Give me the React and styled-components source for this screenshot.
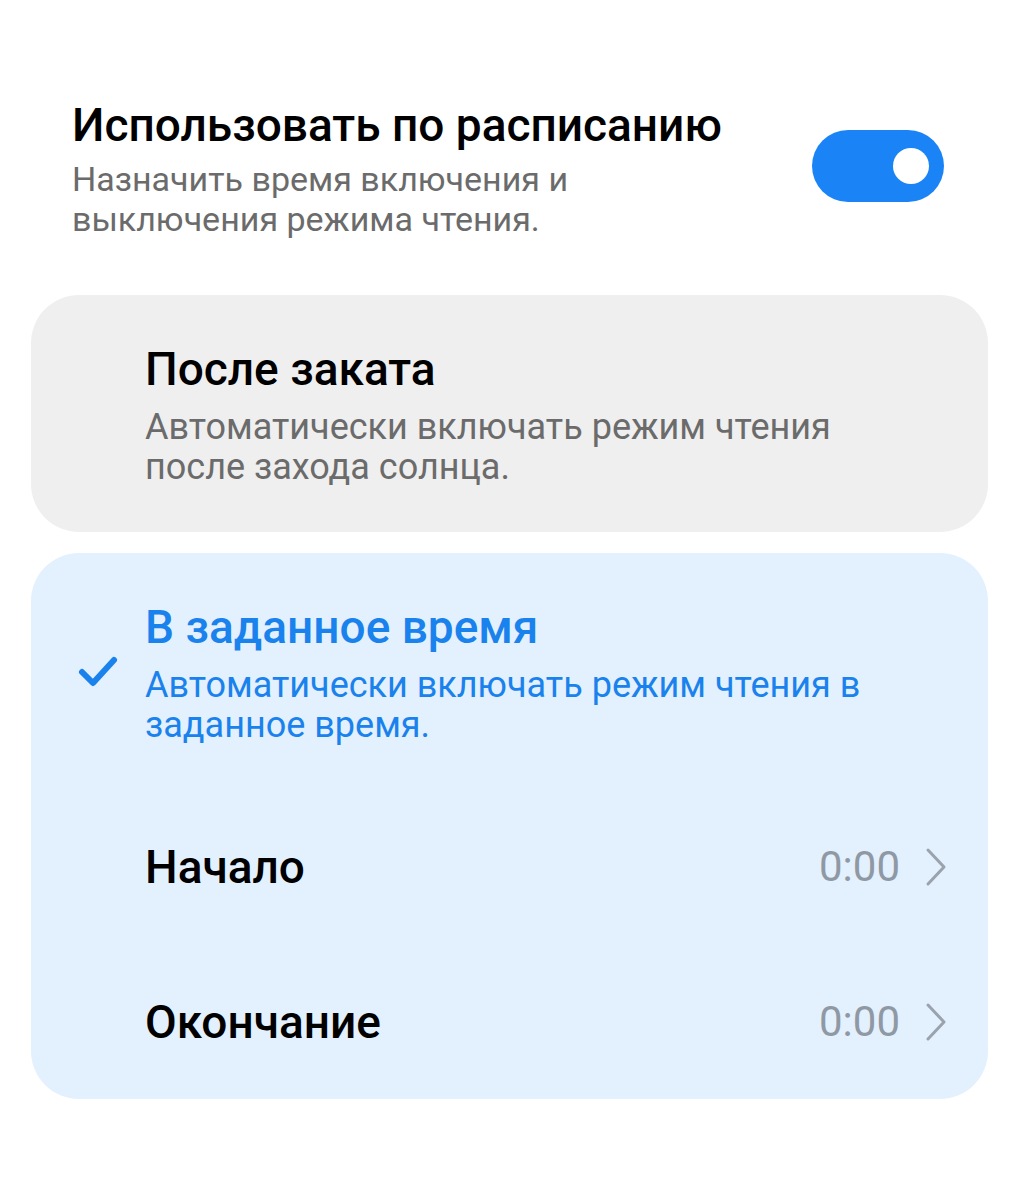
import React from "react";
import styled, { createGlobalStyle } from "styled-components";

const Global = createGlobalStyle`
  * { box-sizing: border-box; }
  html, body { margin: 0; padding: 0; background: #ffffff; }
  body { font-family: Roboto, "Noto Sans", sans-serif; -webkit-font-smoothing: antialiased; }
`;

const Page = styled.div`
  width: 1019px;
  height: 1200px;
  background: #ffffff;
  padding: 96px 31px 0 31px;
  display: flex;
  flex-direction: column;
  gap: 21px;
`;

const ScheduleHeader = styled.div`
  display: flex;
  align-items: center;
  justify-content: space-between;
  padding: 0 44px 0 41px;
  margin-bottom: 35px;
`;

const TextStack = styled.div`
  display: flex;
  flex-direction: column;
  gap: ${p => p.$gap || 5}px;
`;

const Title = styled.div`
  font-size: 46px;
  line-height: 58px;
  font-weight: 500;
  color: ${p => (p.$active ? "#1a82ec" : "#000000")};
`;

const Subtitle = styled.div`
  font-size: ${p => p.$size || 34}px;
  line-height: 40px;
  font-weight: 400;
  color: ${p => (p.$active ? "#1a82ec" : "#6b6b6b")};
  max-width: ${p => p.$max || 720}px;
`;

const Toggle = styled.div`
  width: 132px;
  height: 72px;
  border-radius: 36px;
  background: #1a84f7;
  display: flex;
  align-items: center;
  justify-content: flex-end;
  padding-right: 15px;
  flex-shrink: 0;
  margin-top: -3px;
`;

const Knob = styled.div`
  width: 36px;
  height: 36px;
  border-radius: 50%;
  background: #ffffff;
`;

const Card = styled.div`
  border-radius: 48px;
  background: ${p => (p.$selected ? "#e3f0fe" : "#efefef")};
  display: flex;
  flex-direction: column;
`;

const OptionRow = styled.div`
  display: grid;
  grid-template-columns: 114px 1fr;
  align-items: center;
  padding: ${p => p.$pad};
`;

const CheckSlot = styled.div`
  display: flex;
  justify-content: flex-start;
  padding-left: 46px;
`;

const TimeRow = styled.div`
  display: flex;
  align-items: center;
  justify-content: space-between;
  height: 155px;
  padding: 0 40px 0 114px;
`;

const RowLabel = styled.div`
  font-size: 46px;
  font-weight: 500;
  color: #000000;
`;

const RowValue = styled.div`
  display: flex;
  align-items: center;
  gap: 24px;
  font-size: 42px;
  color: #8f99a4;
`;

function Check() {
  return (
    <svg width="42" height="34" viewBox="0 0 42 34">
      <path d="M5 17 L16 28 L37 5" fill="none" stroke="#1a82ec" strokeWidth="6" strokeLinecap="round" strokeLinejoin="round" />
    </svg>
  );
}

function Chevron() {
  return (
    <svg width="24" height="40" viewBox="0 0 24 40">
      <path d="M4 3 L20 20 L4 37" fill="none" stroke="#9aa3ad" strokeWidth="3" strokeLinecap="round" strokeLinejoin="round" />
    </svg>
  );
}

export default function App() {
  return (
    <>
      <Global />
      <Page>
        <ScheduleHeader>
          <TextStack>
            <Title>Использовать по расписанию</Title>
            <Subtitle $max={540}>Назначить время включения и выключения режима чтения.</Subtitle>
          </TextStack>
          <Toggle><Knob /></Toggle>
        </ScheduleHeader>

        <Card>
          <OptionRow $pad="45px 0 45px 0">
            <span />
            <TextStack $gap={9}>
              <Title>После заката</Title>
              <Subtitle $size={36}>Автоматически включать режим чтения после захода солнца.</Subtitle>
            </TextStack>
          </OptionRow>
        </Card>

        <Card $selected>
          <OptionRow $pad="45px 0 44px 0">
            <CheckSlot><Check /></CheckSlot>
            <TextStack $gap={9}>
              <Title $active>В заданное время</Title>
              <Subtitle $active $size={36}>Автоматически включать режим чтения в заданное время.</Subtitle>
            </TextStack>
          </OptionRow>
          <TimeRow>
            <RowLabel>Начало</RowLabel>
            <RowValue>0:00<Chevron /></RowValue>
          </TimeRow>
          <TimeRow>
            <RowLabel>Окончание</RowLabel>
            <RowValue>0:00<Chevron /></RowValue>
          </TimeRow>
        </Card>
      </Page>
    </>
  );
}
